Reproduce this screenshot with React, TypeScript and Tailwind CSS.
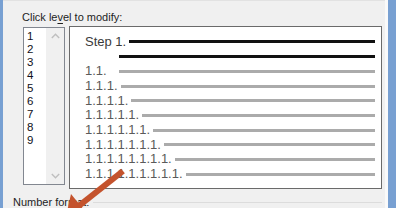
const levels = [
  { label: 'Step 1.', kind: 'step' },
  { label: '', kind: 'black' },
  ...[2, 3, 4, 5, 6, 7, 8, 9].map((n) => ({ label: Array(n).fill('1.').join(''), kind: 'gray' })),
];

function Chevron({ up }: { up?: boolean }) {
  return (
    <svg width="9" height="6" viewBox="0 0 9 6">
      <polyline
        points={up ? '0.8,5 4.5,1.2 8.2,5' : '0.8,1 4.5,4.8 8.2,1'}
        fill="none"
        stroke="#bfbfbf"
        strokeWidth="1.4"
      />
    </svg>
  );
}

export default function App() {
  return (
    <div
      className="relative flex w-[396px] h-[208px] overflow-hidden bg-[#f0f0f0] text-black"
      style={{ fontFamily: '"Liberation Sans", Arial, sans-serif' }}
    >
      {/* window frame left */}
      <div className="w-[3px] bg-[#78a0d2]" />

      {/* dialog body */}
      <div className="flex flex-col w-[382px] border-t border-[#e2e2e2]">
        <div className="pl-[19px] pt-[10px] text-[11px] leading-[13px] text-[#1e1e1e]">
          Click le<span className="underline underline-offset-2">v</span>el to modify:
        </div>

        <div className="flex items-start mt-[2px] pl-[20px]">
          {/* level list */}
          <div className="flex mt-[1px] w-[42px] h-[158px] border border-[#828790] bg-white">
            <div className="w-[22px] pl-[3px] pt-[2px] text-[11.5px] leading-[13px] text-[#101020]">
              {[1, 2, 3, 4, 5, 6, 7, 8, 9].map((n) => (
                <div key={n}>{n}</div>
              ))}
            </div>
            <div className="flex-1 flex flex-col items-center justify-between bg-[#f0f0f0] pt-[5px] pb-[5px]">
              <Chevron up />
              <Chevron />
            </div>
          </div>

          {/* preview */}
          <div className="ml-[4px] w-[313px] h-[163px] border border-[#6a6a6a] bg-white pt-[7.6px] pl-[15px] pr-[6px]">
            {levels.map((lv, i) => (
              <div key={i} className="flex items-center h-[14.7px]">
                {lv.kind === 'step' ? (
                  <span className="text-[13px] leading-[14px] text-[#3a3a3a] whitespace-nowrap">{lv.label}</span>
                ) : (
                  <span className="min-w-[31px] text-[13px] leading-[14px] text-[#5a5a5a] whitespace-nowrap">
                    {lv.label}
                  </span>
                )}
                <div
                  className={
                    lv.kind === 'gray'
                      ? 'flex-1 ml-[3px] h-[3px] bg-[#ababab]'
                      : 'flex-1 ml-[3px] h-[3px] bg-[#111111]'
                  }
                />
              </div>
            ))}
          </div>
        </div>

        {/* number format group */}
        <div className="flex items-center mt-[7px] pl-[10px] pr-[3px]">
          <span className="text-[11px] leading-[13px] text-[#1e1e1e] whitespace-nowrap">Number format:</span>
          <div className="flex-1 ml-[4px] h-px bg-[#dcdcdc]" />
        </div>
      </div>

      {/* window frame right */}
      <div className="w-[3px] bg-[#fafafa]" />
      <div className="w-[8px] bg-[#78a0d2]" />

      {/* callout arrow */}
      <svg className="absolute inset-0 pointer-events-none" width="396" height="208" viewBox="0 0 396 208">
        <line x1="123" y1="171" x2="78" y2="206.5" stroke="#c4532d" strokeWidth="6" />
        <polygon points="71,194 89,216 66,216" fill="#c4532d" />
      </svg>
    </div>
  );
}
